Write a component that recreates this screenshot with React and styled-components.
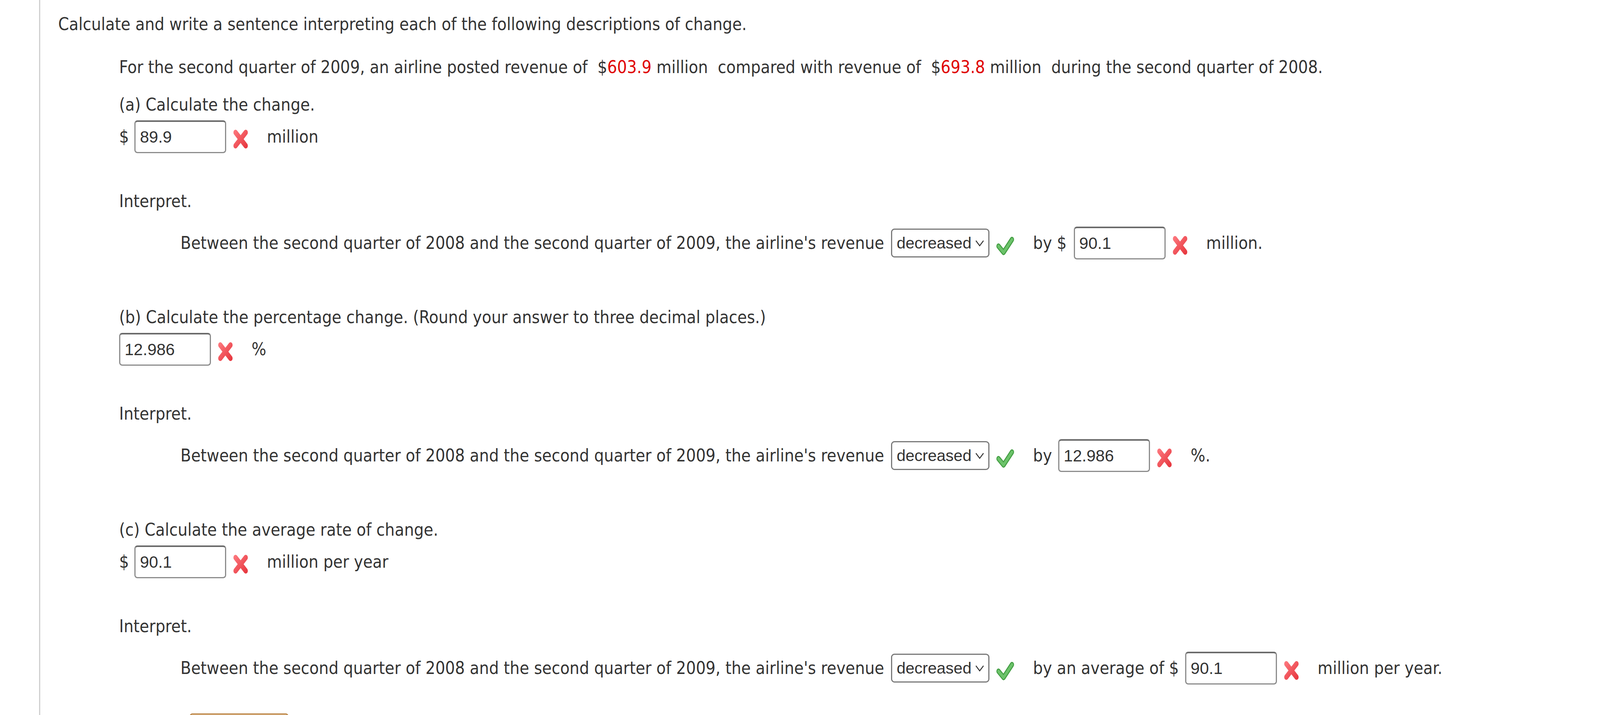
import React from 'react';
import styled, { createGlobalStyle } from 'styled-components';

const GlobalStyle = createGlobalStyle`
  html, body {
    margin: 0;
    padding: 0;
    background: #fff;
    overflow: hidden;
  }
  body {
    font-family: "DejaVu Sans Condensed", "DejaVu Sans", Verdana, sans-serif;
    color: #333;
  }
`;

const Page = styled.div`
  margin-left: 100px;
  min-height: 1830px;
  border-left: 3px solid #cfcfcf;
  padding: 31px 0 0 46px;
  font-size: 44px;
  line-height: 62px;
`;

const Title = styled.p`
  margin: 0;
`;

const Body = styled.div`
  margin-left: 156px;
`;

const Intro = styled.p`
  margin: 48px 0 0;
  white-space: pre;
`;

const Red = styled.span`
  color: #e00000;
`;

const Label = styled.p`
  margin: ${({ $first }) => ($first ? 34 : 117)}px 0 0;
`;

const AnswerRow = styled.div`
  display: flex;
  align-items: center;
  height: 84px;
  margin-top: 9px;
`;

const Interpret = styled.p`
  margin: 92px 0 0;
`;

const Sentence = styled.div`
  display: flex;
  align-items: center;
  height: 84px;
  margin: 34px 0 0 157px;
  white-space: pre;
`;

const Unit = styled.span`
  margin-left: ${({ $gap }) => $gap ?? 47}px;
`;

const Field = styled.input`
  box-sizing: border-box;
  width: 235px;
  height: 84px;
  margin: 0 0 0 ${({ $gap }) => $gap ?? 0}px;
  padding: 0 11px;
  border: 3px solid #8c8c8c;
  border-top: 4px solid #6a6a6a;
  border-radius: 8px;
  background: #fff;
  font-family: "Liberation Sans", Arial, sans-serif;
  font-size: 42px;
  color: #333;
  outline: none;
`;

const Select = styled.div`
  box-sizing: border-box;
  display: flex;
  align-items: center;
  justify-content: space-between;
  width: 252px;
  height: 74px;
  margin-left: 17px;
  padding: 0 10px 0 12px;
  border: 3px solid #7a7a7a;
  border-radius: 9px;
  background: #fff;
  font-family: "Liberation Sans", Arial, sans-serif;
  font-size: 41px;
  color: #333;
`;

const Mark = styled.span`
  display: inline-flex;
  margin: 12px 0 0 ${({ $gap }) => $gap ?? 17}px;
`;

const Submit = styled.button`
  display: block;
  width: 252px;
  height: 90px;
  margin: 74px 0 0 181px;
  border: 3px solid #b8803f;
  border-radius: 6px;
  background: linear-gradient(#fbe9cf, #f0c98c);
`;

const Chevron = () => (
  <svg width="24" height="20" viewBox="0 0 32 20" preserveAspectRatio="none">
    <polyline points="3,4 16,17 29,4" fill="none" stroke="#333" strokeWidth="3" />
  </svg>
);

const Check = () => (
  <Mark>
    <svg width="46" height="50" viewBox="0 0 60 50" preserveAspectRatio="none">
      <path d="M8 27 L25 43 L53 10" fill="none" stroke="#449e44" strokeWidth="14" strokeLinecap="round" strokeLinejoin="round" />
      <path d="M8 27 L25 43 L53 10" fill="none" stroke="#6cc36a" strokeWidth="8" strokeLinecap="round" strokeLinejoin="round" />
    </svg>
  </Mark>
);

const Cross = () => (
  <Mark>
    <svg width="40" height="52" viewBox="0 0 52 52" preserveAspectRatio="none">
      <defs>
        <linearGradient id="xg" x1="0" y1="0" x2="52" y2="52" gradientUnits="userSpaceOnUse">
          <stop offset="0" stopColor="#ff7f85" />
          <stop offset="1" stopColor="#e42f37" />
        </linearGradient>
      </defs>
      <path d="M9 9 L43 43 M43 9 L9 43" fill="none" stroke="url(#xg)" strokeWidth="14" strokeLinecap="round" />
    </svg>
  </Mark>
);

const Decreased = () => (
  <Select>
    <span>decreased</span>
    <Chevron />
  </Select>
);

const LEAD = "Between the second quarter of 2008 and the second quarter of 2009, the airline's revenue";

const App = () => (
  <>
    <GlobalStyle />
    <Page>
      <Title>Calculate and write a sentence interpreting each of the following descriptions of change.</Title>
      <Body>
        <Intro>
          For the second quarter of 2009, an airline posted revenue of  $<Red>603.9</Red> million  compared with revenue of  $<Red>693.8</Red> million  during the second quarter of 2008.
        </Intro>

        <Label $first>(a) Calculate the change.</Label>
        <AnswerRow>
          <span>$</span>
          <Field readOnly value="89.9" $gap={14} />
          <Cross />
          <Unit>million</Unit>
        </AnswerRow>
        <Interpret>Interpret.</Interpret>
        <Sentence>
          <span>{LEAD}</span>
          <Decreased />
          <Check />
          <Unit $gap={49}>by $</Unit>
          <Field readOnly value="90.1" $gap={18} />
          <Cross />
          <Unit>million.</Unit>
        </Sentence>

        <Label>(b) Calculate the percentage change. (Round your answer to three decimal places.)</Label>
        <AnswerRow>
          <Field readOnly value="12.986" />
          <Cross />
          <Unit>%</Unit>
        </AnswerRow>
        <Interpret>Interpret.</Interpret>
        <Sentence>
          <span>{LEAD}</span>
          <Decreased />
          <Check />
          <Unit $gap={49}>by</Unit>
          <Field readOnly value="12.986" $gap={16} />
          <Cross />
          <Unit>%.</Unit>
        </Sentence>

        <Label>(c) Calculate the average rate of change.</Label>
        <AnswerRow>
          <span>$</span>
          <Field readOnly value="90.1" $gap={14} />
          <Cross />
          <Unit>million per year</Unit>
        </AnswerRow>
        <Interpret>Interpret.</Interpret>
        <Sentence>
          <span>{LEAD}</span>
          <Decreased />
          <Check />
          <Unit $gap={49}>by an average of $</Unit>
          <Field readOnly value="90.1" $gap={16} />
          <Cross />
          <Unit>million per year.</Unit>
        </Sentence>

        <Submit type="button" />
      </Body>
    </Page>
  </>
);

export default App;
